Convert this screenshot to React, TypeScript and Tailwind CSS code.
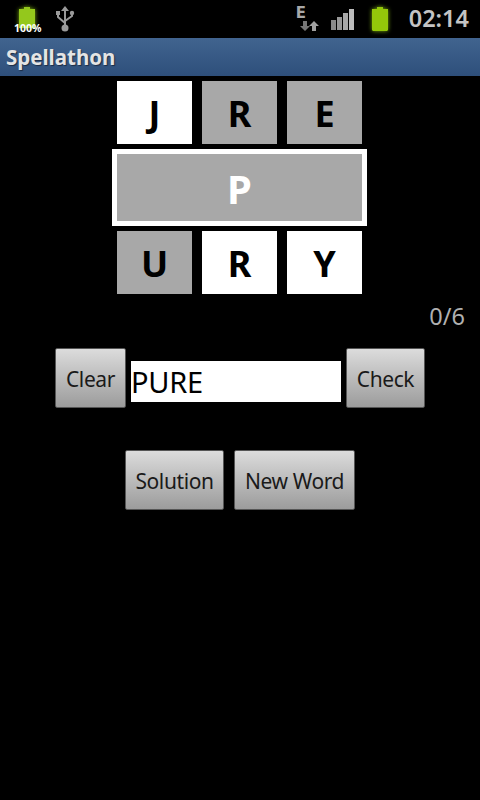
const font = { fontFamily: '"Noto Sans", "Open Sans", sans-serif' }

function Tile({ letter, on }: { letter: string; on?: boolean }) {
  return (
    <div
      className={`w-[75px] h-[63px] flex items-center justify-center pt-[2px] text-[36px] font-bold text-black ${
        on ? 'bg-white' : 'bg-[#a8a8a8]'
      }`}
    >
      {letter}
    </div>
  )
}

function AppButton({ label, width }: { label: string; width: string }) {
  return (
    <button
      className={`${width} h-[60px] shrink-0 flex items-center justify-center pt-[3px] text-[21px] tracking-[-0.4px] text-[#1a1a1a] border border-[#555] rounded-[2px] bg-gradient-to-b from-[#dcdcdc] to-[#9c9c9c]`}
    >
      {label}
    </button>
  )
}

function StatusBar() {
  return (
    <div className="h-[38px] bg-black flex items-center pl-[14px] pr-[11px]">
      <div className="relative w-[28px] h-[38px]">
        <svg width="28" height="30" viewBox="0 0 28 30" className="absolute left-0 top-[5px] drop-shadow-[0_0_2px_#7fb010]">
          <path d="M5 4h5V2h6v2h5v19H5z" fill="#94c81c" />
        </svg>
        <span className="absolute left-0 top-[22px] text-[10.5px] leading-[12px] font-bold text-white">100%</span>
      </div>
      <svg width="20" height="26" viewBox="0 0 20 26" className="ml-[13px]" fill="none" stroke="#9a9a9a" strokeWidth="2">
        <path d="M10 3v19M3 8v3l7 6M17 8v2l-7 5" />
        <path d="M10 0l4 5H6z" fill="#9a9a9a" stroke="none" />
        <circle cx="10" cy="22" r="3.5" fill="#9a9a9a" stroke="none" />
        <rect x="1" y="5" width="4" height="4" fill="#9a9a9a" stroke="none" />
        <circle cx="17" cy="7" r="2.2" fill="#9a9a9a" stroke="none" />
      </svg>
      <div className="ml-auto w-[24px] h-[26px] relative">
        <span className="absolute left-[0px] top-[-2px] text-[15px] leading-[18px] font-bold text-[#a8a8a8] font-['DejaVu_Sans']">E</span>
        <svg width="24" height="12" viewBox="0 0 24 12" className="absolute left-[3px] top-[14px]">
          <path d="M4 1h4v5h3l-5 5-5-5h3z" fill="#777" />
          <path d="M15 1l5 5h-3v5h-4V6h-3z" fill="#a0a0a0" />
        </svg>
      </div>
      <svg width="24" height="22" viewBox="0 0 24 22" className="ml-[11px]">
        <rect x="0" y="12" width="5" height="10" fill="#8a8a8a" />
        <rect x="6" y="9" width="5" height="13" fill="#989898" />
        <rect x="12" y="5" width="5" height="17" fill="#a8a8a8" />
        <rect x="18" y="1" width="5" height="21" fill="#bcbcbc" />
      </svg>
      <svg width="18" height="25" viewBox="0 0 18 25" className="ml-[16px] drop-shadow-[0_0_2px_#7fb010]">
        <path d="M1 2h5V0h6v2h5v21l-1 1H2l-1-1z" fill="#94c80a" />
      </svg>
      <span className="ml-[20px] text-[23.5px] font-semibold leading-none text-[#c4c4c4]">02:14</span>
    </div>
  )
}

export default function App() {
  return (
    <div className="w-[480px] h-[800px] bg-black overflow-hidden" style={font}>
      <StatusBar />

      {/* Title bar */}
      <div className="h-[38px] flex items-center px-[6px] bg-gradient-to-b from-[#41648f] to-[#2e4f7b]">
        <span className="text-[20.5px] font-bold text-[#e4e4e4] [text-shadow:1px_1px_1px_#1c2c44]">Spellathon</span>
      </div>

      {/* Letter grid */}
      <div className="flex flex-col items-center pt-[5px] pr-[1px]">
        <div className="flex gap-[10px]">
          <Tile letter="J" on />
          <Tile letter="R" />
          <Tile letter="E" />
        </div>
        <div className="w-[255px] h-[77px] my-[5px] border-[5px] border-white bg-[#a8a8a8] flex items-center justify-center pt-[2px] text-[40px] font-bold text-white">
          P
        </div>
        <div className="flex gap-[10px]">
          <Tile letter="U" />
          <Tile letter="R" on />
          <Tile letter="Y" on />
        </div>
      </div>

      <div className="text-right pr-[15px] mt-[6px] text-[23.5px] leading-[32px] text-[#b0b0b0]">0/6</div>

      {/* Input row */}
      <div className="flex items-start pl-[55px] mt-[16px] gap-[5px]">
        <AppButton label="Clear" width="w-[71px]" />
        <div className="w-[210px] h-[41px] mt-[13px] bg-white flex items-center text-[29px] tracking-[-0.3px] text-black">PURE</div>
        <AppButton label="Check" width="w-[79px]" />
      </div>

      {/* Action row */}
      <div className="flex justify-center gap-[10px] mt-[42px]">
        <AppButton label="Solution" width="w-[99px]" />
        <AppButton label="New Word" width="w-[121px]" />
      </div>
    </div>
  )
}
